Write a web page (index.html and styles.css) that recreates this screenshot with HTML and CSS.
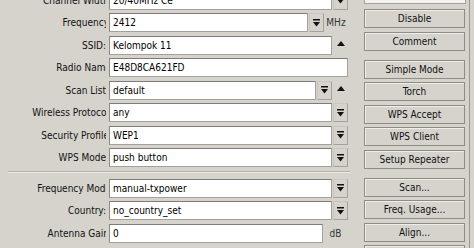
FILE: index.html
```html
<!DOCTYPE html>
<html lang="en">
<head>
    <meta charset="UTF-8">
    <title>Interface wlan1</title>
    <link rel="stylesheet" href="styles.css">
</head>
<body>
    <div class="window">
        <div class="form">
            <div class="row">
                <div class="lbl cut"><span>Channel Width</span></div>
                <div class="field">
                    <div class="input">20/40MHz Ce</div>
                    <div class="drop"><svg width="7" height="8" viewBox="0 0 7 8"><rect width="7" height="1.5"/><polygon points="0,3 7,3 3.5,7.5"/></svg></div>
                </div>
            </div>

            <div class="group">
                <div class="row">
                    <div class="lbl cut"><span>Frequency</span></div>
                    <div class="field">
                        <div class="input">2412</div>
                        <div class="drop"><svg width="7" height="8" viewBox="0 0 7 8"><rect width="7" height="1.5"/><polygon points="0,3 7,3 3.5,7.5"/></svg></div>
                        <div class="unit">MHz</div>
                    </div>
                </div>
                <div class="row">
                    <div class="lbl"><span>SSID:</span></div>
                    <div class="field">
                        <div class="input">Kelompok 11</div>
                        <div class="up"><svg width="8" height="5" viewBox="0 0 8 5"><polygon points="0,5 8,5 4,0"/></svg></div>
                    </div>
                </div>
                <div class="row">
                    <div class="lbl cut more"><span>Radio Name</span></div>
                    <div class="field">
                        <div class="input">E48D8CA621FD</div>
                    </div>
                </div>
                <div class="row">
                    <div class="lbl"><span>Scan List</span></div>
                    <div class="field">
                        <div class="input">default</div>
                        <div class="drop"><svg width="7" height="8" viewBox="0 0 7 8"><rect width="7" height="1.5"/><polygon points="0,3 7,3 3.5,7.5"/></svg></div>
                        <div class="up"><svg width="8" height="5" viewBox="0 0 8 5"><polygon points="0,5 8,5 4,0"/></svg></div>
                    </div>
                </div>
                <div class="row">
                    <div class="lbl cut"><span>Wireless Protocol</span></div>
                    <div class="field">
                        <div class="input">any</div>
                        <div class="drop"><svg width="7" height="8" viewBox="0 0 7 8"><rect width="7" height="1.5"/><polygon points="0,3 7,3 3.5,7.5"/></svg></div>
                    </div>
                </div>
                <div class="row">
                    <div class="lbl cut"><span>Security Profile</span></div>
                    <div class="field">
                        <div class="input">WEP1</div>
                        <div class="drop"><svg width="7" height="8" viewBox="0 0 7 8"><rect width="7" height="1.5"/><polygon points="0,3 7,3 3.5,7.5"/></svg></div>
                    </div>
                </div>
                <div class="row">
                    <div class="lbl"><span>WPS Mode</span></div>
                    <div class="field">
                        <div class="input">push button</div>
                        <div class="drop"><svg width="7" height="8" viewBox="0 0 7 8"><rect width="7" height="1.5"/><polygon points="0,3 7,3 3.5,7.5"/></svg></div>
                    </div>
                </div>
            </div>

            <div class="separator"></div>

            <div class="group">
                <div class="row">
                    <div class="lbl cut more"><span>Frequency Mode</span></div>
                    <div class="field">
                        <div class="input">manual-txpower</div>
                        <div class="drop"><svg width="7" height="8" viewBox="0 0 7 8"><rect width="7" height="1.5"/><polygon points="0,3 7,3 3.5,7.5"/></svg></div>
                    </div>
                </div>
                <div class="row">
                    <div class="lbl"><span>Country:</span></div>
                    <div class="field">
                        <div class="input">no_country_set</div>
                        <div class="drop"><svg width="7" height="8" viewBox="0 0 7 8"><rect width="7" height="1.5"/><polygon points="0,3 7,3 3.5,7.5"/></svg></div>
                    </div>
                </div>
                <div class="row">
                    <div class="lbl cut"><span>Antenna Gain</span></div>
                    <div class="field">
                        <div class="input">0</div>
                        <div class="unit db">dB</div>
                    </div>
                </div>
            </div>
        </div>

        <div class="side">
            <div class="topbox"></div>
            <div class="btn-group">
                <div class="btn">Disable</div>
                <div class="btn">Comment</div>
            </div>
            <div class="btn-group">
                <div class="btn">Simple Mode</div>
                <div class="btn">Torch</div>
                <div class="btn">WPS Accept</div>
                <div class="btn">WPS Client</div>
                <div class="btn">Setup Repeater</div>
            </div>
            <div class="btn-group">
                <div class="btn">Scan...</div>
                <div class="btn">Freq. Usage...</div>
                <div class="btn">Align...</div>
                <div class="btn">Sniff...</div>
            </div>
        </div>
    </div>
</body>
</html>
```

FILE: styles.css
```css
body {
    margin: 0;
    background-color: #d6d3cd;
    font-family: "DejaVu Sans", sans-serif;
    font-stretch: condensed;
    font-size: 10px;
    color: #111111;
    overflow: hidden;
}

.window {
    display: flex;
    width: 474px;
    height: 248px;
    overflow: hidden;
}

.form {
    width: 355px;
    flex-shrink: 0;
    margin-top: -9.5px;
}

.row {
    display: flex;
    height: 19px;
    margin-bottom: 3.5px;
}

.lbl {
    width: 106px;
    flex-shrink: 0;
    overflow: hidden;
    white-space: nowrap;
    text-align: right;
    line-height: 19px;
}

.lbl span {
    display: inline-block;
}

/* long labels run under the field edge, like in winbox */
.lbl.cut span {
    margin-right: -3px;
}

.lbl.cut.more span {
    margin-right: -5px;
}

.field {
    display: flex;
    align-items: center;
    width: 239px;
    margin-left: 3px;
}

.input {
    flex: 1;
    height: 17px;
    line-height: 17px;
    padding-left: 3px;
    background-color: #ffffff;
    border: 1px solid #a4a19b;
    border-top-color: #7f7c77;
    border-left-color: #8e8b86;
    color: #000000;
    white-space: nowrap;
    overflow: hidden;
}

.drop {
    width: 13px;
    height: 17px;
    margin-left: 1px;
    border: 1px solid #a4a19b;
    border-top-color: #c9c6c0;
    border-left-color: #c9c6c0;
    display: flex;
    align-items: center;
    justify-content: center;
}

.drop svg {
    fill: #111111;
}

.up {
    width: 15px;
    margin-left: 1px;
    display: flex;
    justify-content: center;
    padding-bottom: 3px;
}

.up svg {
    fill: #111111;
}

.unit {
    width: 24px;
    text-align: center;
    color: #333333;
}

.unit.db {
    width: 25px;
}

.separator {
    margin: 3px 5px 6px 8px;
    border-top: 1px solid #b4b1ab;
    border-bottom: 1px solid #ecebe7;
}

.side {
    width: 105px;
    flex-shrink: 0;
    border-right: 1px solid #9a9792;
    padding-left: 9px;
}

.topbox {
    width: 100px;
    height: 17px;
    margin-top: -15px;
    background-color: #f4f3f0;
    border: 1px solid #a4a19b;
}

.btn-group {
    margin-top: 5px;
}

.btn-group + .btn-group {
    margin-top: 9px;
}

.btn {
    width: 99px;
    height: 17px;
    line-height: 17px;
    margin-bottom: 3.5px;
    text-align: center;
    border: 1px solid #8f8c87;
    box-shadow: inset 1px 1px 0 #efede9;
    color: #111111;
    white-space: nowrap;
}
```
